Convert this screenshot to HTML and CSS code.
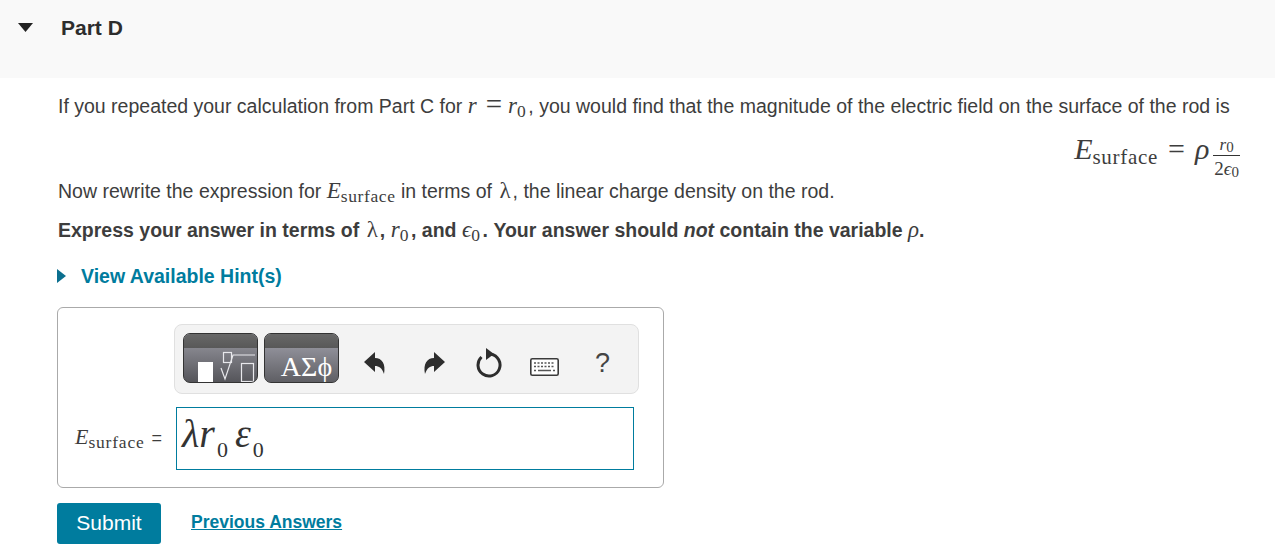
FILE: index.html
```html
<!DOCTYPE html>
<html lang="en">
<head>
<meta charset="utf-8">
<title>Part D</title>
<link rel="stylesheet" href="styles.css">
</head>
<body>
<header class="part-head">
  <svg class="caret-down" width="15" height="9" viewBox="0 0 15 9"><path d="M0 0H15L7.500 9Z"/></svg>
  <h2 class="part-title">Part D</h2>
</header>
<main class="content">
  <p class="line line-first">If you repeated your calculation from Part C for <span class="m"><i>r</i></span><span class="m op">=</span><span class="m pad-r"><i>r</i><sub>0</sub></span>, you would find that the magnitude of the electric field on the surface of the rod is</p>
  <div class="display">
    <span class="m big"><i>E</i><sub>surface</sub></span>
    <span class="m big op-big">=</span>
    <span class="m big"><i>ρ</i></span>
    <span class="frac"><span class="num m"><i>r</i><sub>0</sub></span><span class="den m">2<i>ϵ</i><sub>0</sub></span></span>
  </div>
  <p class="line line-now">Now rewrite the expression for <span class="m"><i>E</i><sub>surface</sub></span> in terms of <span class="m pad-l">λ</span>, the linear charge density on the rod.</p>
  <p class="line line-bold"><b>Express your answer in terms of <span class="m nb pad-l">λ</span>, <span class="m nb pad-r"><i>r</i><sub>0</sub></span>, and <span class="m nb pad-r"><i>ϵ</i><sub>0</sub></span>. Your answer should <em>not</em> contain the variable <span class="m nb"><i>ρ</i></span>.</b></p>
  <a class="hint" href="#"><svg class="caret-right" width="9" height="14" viewBox="0 0 9 14"><path d="M0 0L9 7L0 14Z"/></svg>View Available Hint(s)</a>
  <section class="answer">
    <div class="toolbar">
      <div class="tool-btn">
        <div class="tool-top"></div>
        <div class="tool-body">
          <svg width="73" height="34" viewBox="0 0 73 34"><rect x="14" y="14" width="15" height="21" fill="#fff"/><g fill="none" stroke="#e8e8ec" stroke-width="1.2"><rect x="39.500" y="4.500" width="8" height="10"/><path d="M37 20l4 11 8-24H71"/><rect x="57.500" y="15.500" width="12" height="18"/></g></svg>
        </div>
      </div>
      <div class="tool-btn tool-greek">
        <div class="tool-top"></div>
        <div class="tool-body">ΑΣϕ</div>
      </div>
      <svg class="ico ico-undo" width="22" height="24" viewBox="0 0 22 24"><path d="M0 11L11 1V7C18 7 22 13 20 23C18 17 15 15 11 15V21Z"/></svg>
      <svg class="ico ico-redo" width="22" height="24" viewBox="0 0 22 24"><path d="M22 11L11 1V7C4 7 0 13 2 23C4 17 7 15 11 15V21Z"/></svg>
      <svg class="ico ico-reset" width="26" height="30" viewBox="0 0 26 30"><path d="M15 6.200A11 11 0 1 1 5.500 9" fill="none" stroke="#2d2d2d" stroke-width="3"/><path d="M10 0L18 6L10 12Z" fill="#2d2d2d"/></svg>
      <svg class="ico ico-keys" width="29" height="18" viewBox="0 0 29 18"><rect x=".8" y=".8" width="27.400" height="16.400" rx="1.500" fill="#fff" stroke="#3a3a3a" stroke-width="1.600"/><path d="M4 5h21M4 8.500h21" stroke="#555" stroke-width="1.500" stroke-dasharray="2 1.500"/><path d="M8 12.500h13M4 12.500h2M23 12.500h2" stroke="#555" stroke-width="1.500"/></svg>
      <span class="help">?</span>
    </div>
    <div class="eq-row">
      <span class="eq-label"><span class="m"><i>E</i><sub>surface</sub></span><span class="eq-sign">=</span></span>
      <div class="eq-input"><span class="mq"><i class="mq-l">λ</i><i class="mq-r">r</i><sub>0</sub><i class="mq-e">ε</i><sub>0</sub></span></div>
    </div>
  </section>
  <div class="actions">
    <button class="submit" type="button">Submit</button>
    <a class="prev" href="#">Previous Answers</a>
  </div>
</main>
</body>
</html>
```
FILE: styles.css
```css
* { box-sizing: border-box; }
html, body { margin: 0; padding: 0; }
body {
  width: 1275px;
  height: 559px;
  overflow: hidden;
  background: #fff;
  color: #3d3d3d;
  font-family: "Liberation Sans", Arial, sans-serif;
  font-size: 19.500px;
}
.part-head {
  height: 78px;
  background: #f9f9f9;
  display: flex;
  align-items: flex-start;
  padding: 16px 0 0 18px;
}
.caret-down { margin-top: 7px; fill: #222; }
.part-title {
  margin: 0 0 0 28px;
  font-size: 21px;
  line-height: 24px;
  font-weight: bold;
  color: #2d2d2d;
}
.content { padding: 0 0 0 57px; }
.line { margin: 0; padding-left: 1px; line-height: 24px; white-space: nowrap; }
.line-first { padding-top: 16px; }
.m { font-family: "Liberation Serif", "Times New Roman", serif; font-size: 23px; color: #3d3d3d; }
.m i { font-style: italic; }
.m sub { font-size: 17.500px; line-height: 0; vertical-align: -4px; font-style: normal; letter-spacing: .6px; }
.op { font-size: 29px; line-height: 0; margin: 0 6px 0 9px; vertical-align: -1px; }
.pad-r { margin-right: 2px; }
.pad-l { margin: 0 2px; }
.nb { font-weight: normal; }
.display {
  height: 46px;
  margin-top: 10px;
  width: 1183px;
  display: flex;
  justify-content: flex-end;
  align-items: center;
  gap: 4px;
}
.big { font-size: 30px; margin-bottom: 4px; }
.big sub { font-size: 21px; vertical-align: -5px; letter-spacing: .7px; }
.op-big { margin: 0 6px 4px; }
.frac { display: inline-flex; flex-direction: column; align-items: center; margin-top: 10px; }
.num { font-size: 17px; line-height: 21px; border-bottom: 1px solid #333; display: block; width: 100%; text-align: center; }
.den { font-size: 19px; line-height: 21px; padding-top: 2px; display: block; padding-left: 1px; padding-right: 1px; }
.num sub, .den sub { font-size: 15px; vertical-align: -2px; letter-spacing: 0; }
.line-now { margin-top: 5px; }
.line-bold { margin-top: 15px; }
.hint {
  display: flex;
  align-items: center;
  margin-top: 22px;
  height: 24px;
  color: #007c9e;
  font-weight: bold;
  text-decoration: none;
}
.caret-right { fill: #0b6f8f; margin-right: 15px; }
.answer {
  width: 607px;
  height: 181px;
  margin-top: 19px;
  border: 1px solid #aaa;
  border-radius: 6px;
  padding: 16px 0 0 116px;
}
.toolbar {
  width: 465px;
  height: 70px;
  background: #f3f3f3;
  border: 1px solid #e0e0e0;
  border-radius: 8px;
  display: flex;
  align-items: center;
  padding-left: 8px;
}
.tool-btn {
  width: 75px;
  height: 50px;
  border-radius: 7px;
  border: 1px solid #333;
  overflow: hidden;
  background: linear-gradient(#9a9aa3, #55555a);
  margin: -3px 6px 0 0;
  flex: none;
}
.tool-top { height: 14px; background: linear-gradient(#686868, #585858); }
.tool-body { height: 34px; overflow: hidden; }
.tool-body svg { display: block; }
.tool-greek .tool-body {
  font-family: "Liberation Serif", serif;
  font-size: 28px;
  line-height: 38px;
  color: #fff;
  text-align: center;
  padding-left: 10px;
  background: linear-gradient(#8f8f98, #5f5f64);
}
.ico { flex: none; fill: #2d2d2d; margin-top: 8px; }
.ico-undo { margin-left: 19px; }
.ico-redo { margin-left: 37px; }
.ico-reset { margin-left: 31px; }
.ico-keys { margin-left: 28px; margin-top: 16px; }
.help { margin: 8px 0 0 36px; font-size: 27px; color: #444; }
.eq-row { display: flex; align-items: center; margin: 13px 0 0 -99px; }
.eq-label { width: 101px; flex: none; white-space: nowrap; margin-bottom: 4px; }
.eq-sign { font-size: 18px; margin-left: 7px; }
.eq-label .m { font-size: 22px; }
.eq-label .m sub { font-size: 17.500px; letter-spacing: .8px; }
.eq-input {
  width: 458px;
  height: 63px;
  border: 1px solid #007c9e;
  padding: 0 0 10px 5px;
  display: flex;
  align-items: center;
}
.mq { font-family: "Liberation Serif", serif; font-size: 40px; color: #333; line-height: 1; white-space: nowrap; }
.mq sub { font-size: 22px; font-style: normal; vertical-align: -10px; line-height: 0; margin: 0 2px; }
.mq-l, .mq-r, .mq-e { font-style: italic; }
.mq-e { margin-left: 5px; }
.actions { display: flex; align-items: center; margin-top: 15px; }
.submit {
  width: 104px;
  height: 41px;
  border: 0;
  border-radius: 3px;
  background: #007c9e;
  color: #fff;
  font-family: "Liberation Sans", Arial, sans-serif;
  font-size: 21px;
  padding: 0 0 2px;
}
.prev {
  margin-left: 30px;
  color: #007c9e;
  font-weight: bold;
  font-size: 17.500px;
  text-decoration: underline;
  margin-top: -2px;
}
```
